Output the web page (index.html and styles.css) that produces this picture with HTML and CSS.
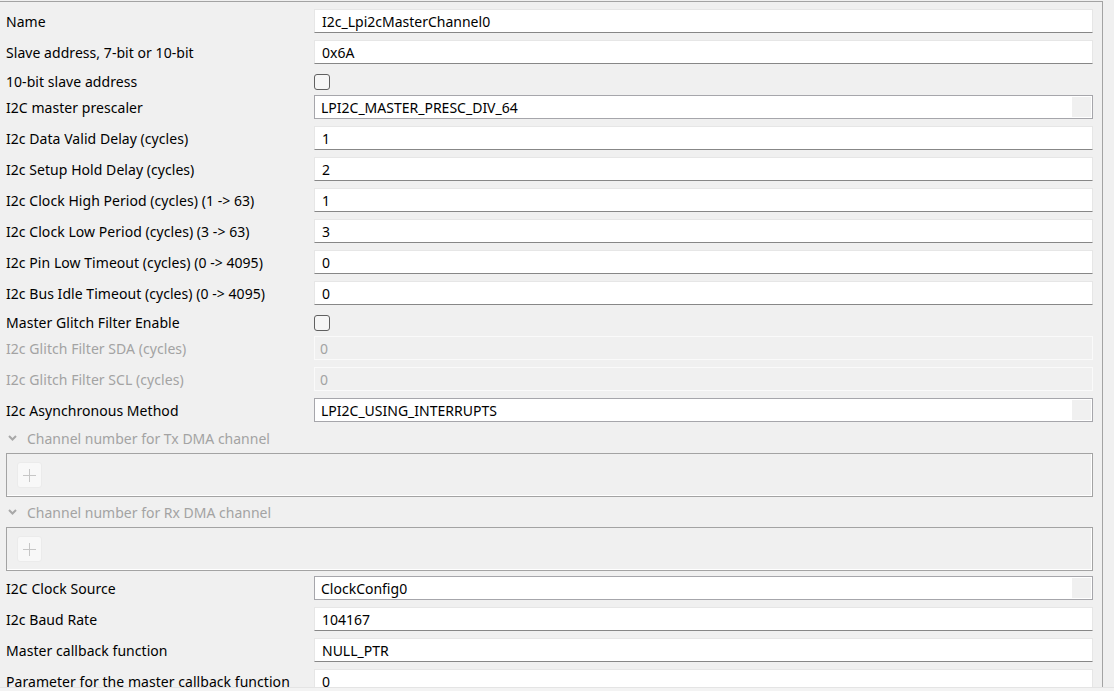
FILE: index.html
```html
<!DOCTYPE html>
<html>
<head>
<meta charset="utf-8">
<link rel="stylesheet" href="styles.css">
</head>
<body>
<div class="panel">
  <div class="form">
    <div class="row"><span class="label">Name</span><div class="input">I2c_Lpi2cMasterChannel0</div></div>
    <div class="row"><span class="label">Slave address, 7-bit or 10-bit</span><div class="input">0x6A</div></div>
    <div class="row row-check"><span class="label">10-bit slave address</span><div class="checkcell"><span class="checkbox"></span></div></div>
    <div class="row"><span class="label">I2C master prescaler</span><div class="combo"><span class="combo-text">LPI2C_MASTER_PRESC_DIV_64</span><span class="combo-btn"></span></div></div>
    <div class="row"><span class="label">I2c Data Valid Delay (cycles)</span><div class="input">1</div></div>
    <div class="row"><span class="label">I2c Setup Hold Delay (cycles)</span><div class="input">2</div></div>
    <div class="row"><span class="label">I2c Clock High Period (cycles) (1 -&gt; 63)</span><div class="input">1</div></div>
    <div class="row"><span class="label">I2c Clock Low Period (cycles) (3 -&gt; 63)</span><div class="input">3</div></div>
    <div class="row"><span class="label">I2c Pin Low Timeout (cycles) (0 -&gt; 4095)</span><div class="input">0</div></div>
    <div class="row"><span class="label">I2c Bus Idle Timeout (cycles) (0 -&gt; 4095)</span><div class="input">0</div></div>
    <div class="row row-check"><span class="label">Master Glitch Filter Enable</span><div class="checkcell"><span class="checkbox"></span></div></div>
    <div class="row"><span class="label disabled">I2c Glitch Filter SDA (cycles)</span><div class="input input-disabled">0</div></div>
    <div class="row"><span class="label disabled">I2c Glitch Filter SCL (cycles)</span><div class="input input-disabled">0</div></div>
    <div class="row"><span class="label">I2c Asynchronous Method</span><div class="combo"><span class="combo-text">LPI2C_USING_INTERRUPTS</span><span class="combo-btn"></span></div></div>
    <div class="section">
      <div class="section-head">
        <svg class="chevron" width="9" height="6" viewBox="0 0 9 6"><polyline points="1,1 4.5,4.5 8,1" fill="none" stroke="#a8a8a8" stroke-width="2"/></svg>
        <span class="section-title">Channel number for Tx DMA channel</span>
      </div>
      <div class="group">
        <span class="add-btn"><svg width="13" height="13" viewBox="0 0 13 13"><line x1="6.5" y1="0" x2="6.5" y2="13" stroke="#c6c6c6" stroke-width="1"/><line x1="0" y1="6.5" x2="13" y2="6.5" stroke="#c6c6c6" stroke-width="1"/></svg></span>
      </div>
    </div>
    <div class="section section-last">
      <div class="section-head">
        <svg class="chevron" width="9" height="6" viewBox="0 0 9 6"><polyline points="1,1 4.5,4.5 8,1" fill="none" stroke="#a8a8a8" stroke-width="2"/></svg>
        <span class="section-title">Channel number for Rx DMA channel</span>
      </div>
      <div class="group">
        <span class="add-btn"><svg width="13" height="13" viewBox="0 0 13 13"><line x1="6.5" y1="0" x2="6.5" y2="13" stroke="#c6c6c6" stroke-width="1"/><line x1="0" y1="6.5" x2="13" y2="6.5" stroke="#c6c6c6" stroke-width="1"/></svg></span>
      </div>
    </div>
    <div class="row"><span class="label">I2C Clock Source</span><div class="combo"><span class="combo-text">ClockConfig0</span><span class="combo-btn"></span></div></div>
    <div class="row"><span class="label">I2c Baud Rate</span><div class="input">104167</div></div>
    <div class="row"><span class="label">Master callback function</span><div class="input">NULL_PTR</div></div>
    <div class="row"><span class="label">Parameter for the master callback function</span><div class="input">0</div></div>
  </div>
</div>
<div class="bottom-bar"></div>
</body>
</html>
```

FILE: styles.css
```css
html, body {
  margin: 0;
  padding: 0;
  background: #f0f0f0;
  width: 1114px;
  height: 691px;
  overflow: hidden;
  font-family: "Noto Sans", "Open Sans", sans-serif;
  font-size: 14px;
  color: #000;
}

.panel {
  box-sizing: border-box;
  width: 1103px;
  height: 686px;
  margin-top: 1px;
  border-top: 1px solid #a3a3a3;
  border-right: 1px solid #a3a3a3;
  overflow: hidden;
}

.form {
  display: flex;
  flex-direction: column;
  gap: 7px;
  padding: 7px 9px 0 6px;
}

.row {
  display: grid;
  grid-template-columns: 308px 779px;
  align-items: center;
  height: 24px;
}

.row-check {
  height: 17px;
}

.label {
  white-space: nowrap;
  line-height: 18px;
  padding-top: 2px;
  letter-spacing: 0.05px;
}

.label.disabled {
  color: #a3a3a3;
}

.input {
  box-sizing: border-box;
  height: 24px;
  background: #fff;
  border: 1px solid #e6e6e6;
  border-bottom-color: #878787;
  padding: 1px 7px 0;
  line-height: 21px;
  white-space: nowrap;
}

.input-disabled {
  background: #f0f0f0;
  border: 1px solid #fafafa;
  color: #a3a3a3;
  padding-left: 5px;
}

.checkcell {
  display: flex;
  align-items: flex-end;
  height: 17px;
}

.checkbox {
  box-sizing: border-box;
  width: 16px;
  height: 16px;
  border: 1px solid #606060;
  border-radius: 3px;
  background: #f6f6f6;
}

.combo {
  box-sizing: border-box;
  height: 24px;
  background: #fff;
  border: 1px solid #a6a6ab;
  display: flex;
  align-items: center;
  padding: 1px;
}

.combo-text {
  flex: 1;
  padding: 1px 0 0 5px;
  line-height: 19px;
  white-space: nowrap;
}

.combo-btn {
  width: 19px;
  height: 20px;
  background: #f0f0f0;
}

.section {
  display: flex;
  flex-direction: column;
  margin-bottom: -1px;
}

.section-last {
  margin-bottom: -2px;
}

.section-head {
  height: 18px;
  display: flex;
  align-items: center;
  margin-bottom: 6px;
  color: #a3a3a3;
}

.chevron {
  margin-left: 2px;
  margin-right: 10px;
}

.section-title {
  line-height: 18px;
  padding-top: 2px;
  white-space: nowrap;
}

.group {
  box-sizing: border-box;
  width: 1087px;
  height: 44px;
  border: 1px solid #a3a3a3;
  box-shadow: inset -1px -1px 0 #ffffff;
  padding: 8px 0 0 10px;
}

.add-btn {
  box-sizing: border-box;
  width: 25px;
  height: 26px;
  display: flex;
  align-items: center;
  justify-content: center;
  background: #f8f8f8;
  border: 1px solid #ebebeb;
  border-radius: 3px;
}

.bottom-bar {
  height: 4px;
  border-top: 1px solid #e4e4e4;
  background: #f3f3f3;
}
```
